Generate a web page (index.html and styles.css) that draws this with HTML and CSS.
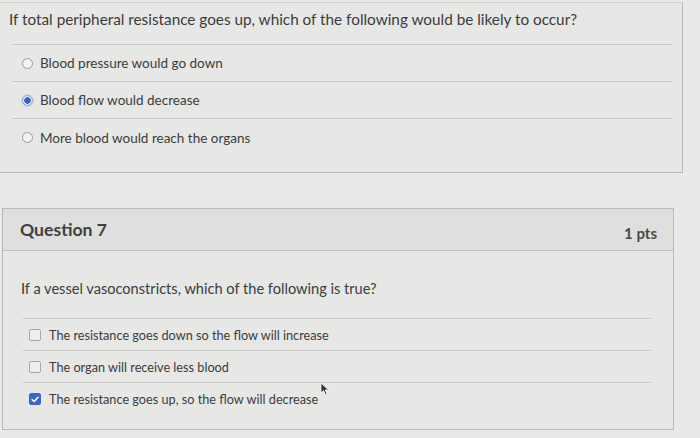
FILE: index.html
```html
<!DOCTYPE html>
<html>
<head>
<meta charset="utf-8">
<link rel="stylesheet" href="styles.css">
</head>
<body>
<div class="page">
  <section class="card card-prev">
    <p class="qtext qtext-prev">If total peripheral resistance goes up, which of the following would be likely to occur?</p>
    <ul class="answers answers-prev">
      <li class="answer"><span class="radio"></span><span>Blood pressure would go down</span></li>
      <li class="answer"><span class="radio radio-on"></span><span>Blood flow would decrease</span></li>
      <li class="answer answer-last"><span class="radio"></span><span>More blood would reach the organs</span></li>
    </ul>
  </section>

  <section class="card card-q7">
    <header class="qhead">
      <h2 class="qtitle">Question 7</h2>
      <span class="pts">1 pts</span>
    </header>
    <div class="qbody">
      <p class="qtext qtext-q7">If a vessel vasoconstricts, which of the following is true?</p>
      <ul class="answers answers-q7">
        <li class="answer answer-sm"><span class="check"></span><span>The resistance goes down so the flow will increase</span></li>
        <li class="answer answer-sm"><span class="check"></span><span>The organ will receive less blood</span></li>
        <li class="answer answer-sm answer-last"><span class="check check-on"><svg viewBox="0 0 12 12" width="12" height="12"><path d="M2.6 6.2 L5 8.5 L9.6 3.4" fill="none" stroke="#fff" stroke-width="1.8" stroke-linecap="round" stroke-linejoin="round"/></svg></span><span>The resistance goes up, so the flow will decrease</span></li>
      </ul>
      <svg class="cursor" viewBox="0 0 10 14" width="10" height="14"><path d="M1 1 L1 11 L3.5 8.6 L5.4 12.6 L7 11.9 L5.2 8 L8.6 8 Z" fill="#333" stroke="#fff" stroke-width="0.8"/></svg>
    </div>
  </section>
</div>
</body>
</html>
```

FILE: styles.css
```css
html, body {
  margin: 0;
  padding: 0;
  background: #e9e9e8;
  font-family: Lato, "Open Sans", "Liberation Sans", sans-serif;
  color: #3c3c3c;
}

.page {
  width: 700px;
  height: 438px;
  overflow: hidden;
  display: flex;
  flex-direction: column;
}

.card {
  background: #e7e7e6;
  border: 1px solid #b9b9b9;
  box-sizing: border-box;
}

.card-prev {
  margin: 2px 0 0 -1px;
  width: 684px;
  height: 171px;
  padding: 7px 0 0 9px;
  border-top-color: #d0d0d0;
}

.qtext {
  margin: 0;
  font-weight: 400;
}

.qtext-prev {
  font-size: 15.3px;
  line-height: 18px;
}

.answers {
  list-style: none;
  margin: 0;
  padding: 0;
}

.answers-prev {
  margin: 16px 0 0 3px;
  width: 660px;
  border-top: 1px solid #c9c9c9;
}

.answer {
  display: flex;
  align-items: center;
  gap: 7px;
  height: 37px;
  font-size: 13.5px;
  border-bottom: 1px solid #c9c9c9;
  padding-left: 10px;
  box-sizing: border-box;
}

.answer-last {
  border-bottom: none;
}

.radio {
  width: 11px;
  height: 11px;
  border-radius: 50%;
  border: 1px solid #9a9a9a;
  background: #f2f2f2;
  box-sizing: border-box;
  flex: none;
}

.radio-on {
  border: 1px solid #8aa2d6;
  background: radial-gradient(circle, #3d5fc4 0 3px, #dfe6f6 3.5px);
  box-shadow: 0 0 0 1px #c7d3ef;
}

.card-q7 {
  margin: 35px 0 0 2px;
  width: 672px;
  height: 222px;
  display: flex;
  flex-direction: column;
}

.qhead {
  display: flex;
  justify-content: space-between;
  align-items: center;
  height: 42px;
  padding: 0 16px 0 17px;
  background: #dfdfde;
  border-bottom: 1px solid #bdbdbd;
  box-sizing: border-box;
}

.qtitle {
  margin: 0;
  font-size: 17.6px;
  font-weight: 700;
  color: #404040;
}

.pts {
  font-size: 15px;
  font-weight: 700;
  color: #4a4a4a;
  margin-top: 6px;
}

.qbody {
  position: relative;
  padding: 29px 0 0 18px;
}

.qtext-q7 {
  font-size: 14.6px;
  line-height: 17px;
}

.answers-q7 {
  margin: 21px 0 0 2px;
  width: 628px;
  border-top: 1px solid #c9c9c9;
}

.answer-sm {
  height: 32px;
  font-size: 12.7px;
  padding-left: 6px;
  gap: 8px;
}

.check {
  width: 12px;
  height: 12px;
  border: 1px solid #a5a5a5;
  border-radius: 2px;
  background: #efefef;
  box-sizing: border-box;
  flex: none;
  display: flex;
  align-items: center;
  justify-content: center;
}

.check-on {
  background: #3d66c8;
  border-color: #3d66c8;
}

.check-on svg {
  width: 11px;
  height: 11px;
}

.cursor {
  position: absolute;
  left: 317px;
  top: 131px;
}
```
